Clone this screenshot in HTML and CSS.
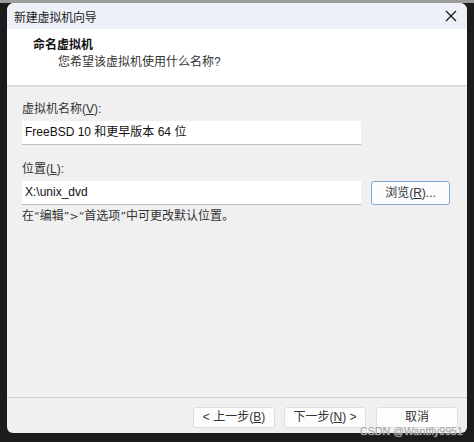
FILE: index.html
```html
<!DOCTYPE html>
<html lang="zh-CN">
<head>
<meta charset="utf-8">
<title>新建虚拟机向导</title>
<link rel="stylesheet" href="styles.css">
</head>
<body>
<div class="topstrip"></div>
<div class="dialog">
  <div class="titlebar">
    <span class="title">新建虚拟机向导</span>
    <svg class="close" width="12" height="12" viewBox="0 0 12 12"><path d="M1 1 L11 11 M11 1 L1 11" stroke="#1a1a1a" stroke-width="1.3" fill="none"/></svg>
  </div>
  <div class="header">
    <div class="h-title">命名虚拟机</div>
    <div class="h-sub">您希望该虚拟机使用什么名称?</div>
  </div>
  <div class="content">
    <div class="label">虚拟机名称(<u>V</u>):</div>
    <div class="row">
      <div class="input">FreeBSD 10 和更早版本 64 位</div>
    </div>
    <div class="label second">位置(<u>L</u>):</div>
    <div class="row">
      <div class="input">X:\unix_dvd</div>
      <div class="browse">浏览(<u>R</u>)...</div>
    </div>
    <div class="hint">在<span class="q">“</span>编辑<span class="q">”&gt;“</span>首选项<span class="q">”</span>中可更改默认位置。</div>
  </div>
  <div class="footer">
    <div class="btn">&lt; 上一步(<u>B</u>)</div>
    <div class="btn">下一步(<u>N</u>) &gt;</div>
    <div class="btn cancel">取消</div>
  </div>
</div>
<div class="watermark">CSDN @Wantfly9951</div>
</body>
</html>
```

FILE: styles.css
```css
html, body {
  margin: 0;
  padding: 0;
}
body {
  position: relative;
  width: 474px;
  height: 442px;
  background: #1c1c1c;
  font-family: "Liberation Sans", "Noto Sans CJK SC", sans-serif;
  font-size: 12px;
  color: #1e1e1e;
  overflow: hidden;
}
.topstrip {
  height: 3px;
  background: #9c9c9c;
}
.dialog {
  margin-left: 7px;
  width: 460px;
  height: 430px;
  background: #f0f0f0;
  border-radius: 7px 7px 6px 6px;
  overflow: hidden;
  display: flex;
  flex-direction: column;
}
.titlebar {
  height: 26px;
  background: #eef0f7;
  display: flex;
  align-items: center;
  justify-content: space-between;
  padding: 0 10px 0 7px;
}
.title {
  font-family: "Noto Sans CJK SC", sans-serif;
  font-size: 12px;
  color: #222;
  letter-spacing: -0.2px;
}
.close {
  display: block;
}
.header {
  height: 57px;
  background: #ffffff;
  border-bottom: 1px solid #d6d6d6;
  box-shadow: 0 1px 0 #e4e4e4;
  padding-top: 7px;
  box-sizing: border-box;
}
.h-title {
  font-family: "Noto Sans CJK SC", sans-serif;
  font-weight: bold;
  font-size: 12px;
  line-height: 16px;
  padding-left: 26px;
  color: #111;
}
.h-sub {
  font-size: 12px;
  line-height: 16px;
  margin-top: 2px;
  padding-left: 51px;
  color: #333;
}
.content {
  flex: 1;
  padding: 15px 0 0 15px;
}
.label {
  line-height: 16px;
  color: #333;
}
.label.second {
  margin-top: 16px;
}
.row {
  display: flex;
  gap: 10px;
  margin-top: 4px;
}
.input {
  width: 336px;
  height: 23px;
  line-height: 23px;
  padding-left: 3px;
  background: #ffffff;
  border-bottom: 1px solid #bcbcbc;
  color: #111;
}
.browse {
  width: 77px;
  height: 22px;
  line-height: 22px;
  text-align: center;
  background: #fbfcfd;
  border: 1px solid #7ea9d6;
  border-radius: 3px;
  color: #333;
}
.hint {
  margin-top: 3px;
  line-height: 16px;
  color: #333;
}
.q {
  font-family: "DejaVu Sans", sans-serif;
  font-size: 11px;
}
.footer {
  height: 36px;
  border-top: 1px solid #cfcfcf;
  box-sizing: border-box;
  display: flex;
  justify-content: flex-end;
  gap: 9px;
  padding: 9px 9px 0 0;
}
.btn {
  width: 80px;
  height: 19px;
  line-height: 19px;
  text-align: center;
  background: #fdfdfd;
  border: 1px solid #dedede;
  border-radius: 3px;
  color: #333;
}
.btn.cancel {
  margin-left: 1px;
}
.watermark {
  position: absolute;
  right: 11px;
  top: 425px;
  font-family: "Liberation Sans", sans-serif;
  font-size: 10.5px;
  line-height: 13px;
  color: #9a9a9a;
  text-shadow: 0 0 1px #ffffff;
  letter-spacing: 0.1px;
}
```
